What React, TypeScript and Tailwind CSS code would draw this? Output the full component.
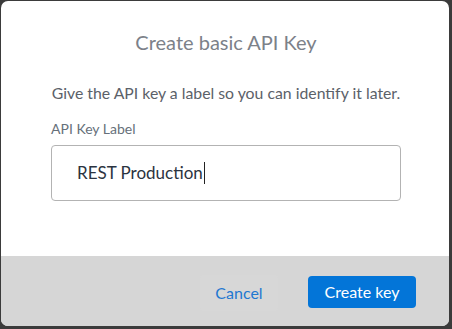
import React from "react";

export default function App() {
  return (
    <div className="w-[452px] h-[329px] bg-[#3b3b3b] pt-px pl-px pr-[3px] pb-[3px] font-['Lato','Noto_Sans',sans-serif]">
      <div className="w-full h-full bg-white rounded-[7px] overflow-hidden flex flex-col">
        <div className="flex-1 flex flex-col pl-[50px] pr-[48px]">
          <h1 className="text-center text-[20px] text-[#7c8189] mt-[28px] leading-[27px]">Create basic API Key</h1>
          <p className="text-center whitespace-nowrap text-[15.8px] text-[#5b6169] mt-[26px] leading-[22px]">Give the API key a label so you can identify it later.</p>
          <label className="text-[14px] text-[#66707a] mt-[16px] leading-[18px]">API Key Label</label>
          <div className="mt-[7px] h-[56px] border border-[#b3b3b3] rounded-[4px] flex items-center pl-[25px]">
            <span className="text-[17px] text-[#2b3340] leading-[22px]">REST Production</span>
            <span className="w-px h-[22px] bg-[#222] ml-px" />
          </div>
        </div>
        <div className="h-[70px] bg-[#d6d6d6] flex items-center justify-end pr-[33px] pt-[2px]">
          <button className="w-[78px] h-[36px] mt-[2px] text-[16px] text-[#1f78d1] rounded-[4px] bg-[#d7d7d7]">Cancel</button>
          <button className="ml-[30px] w-[108px] h-[32px] text-[16px] text-white bg-[#0375d8] rounded-[4px]">Create key</button>
        </div>
      </div>
    </div>
  );
}
